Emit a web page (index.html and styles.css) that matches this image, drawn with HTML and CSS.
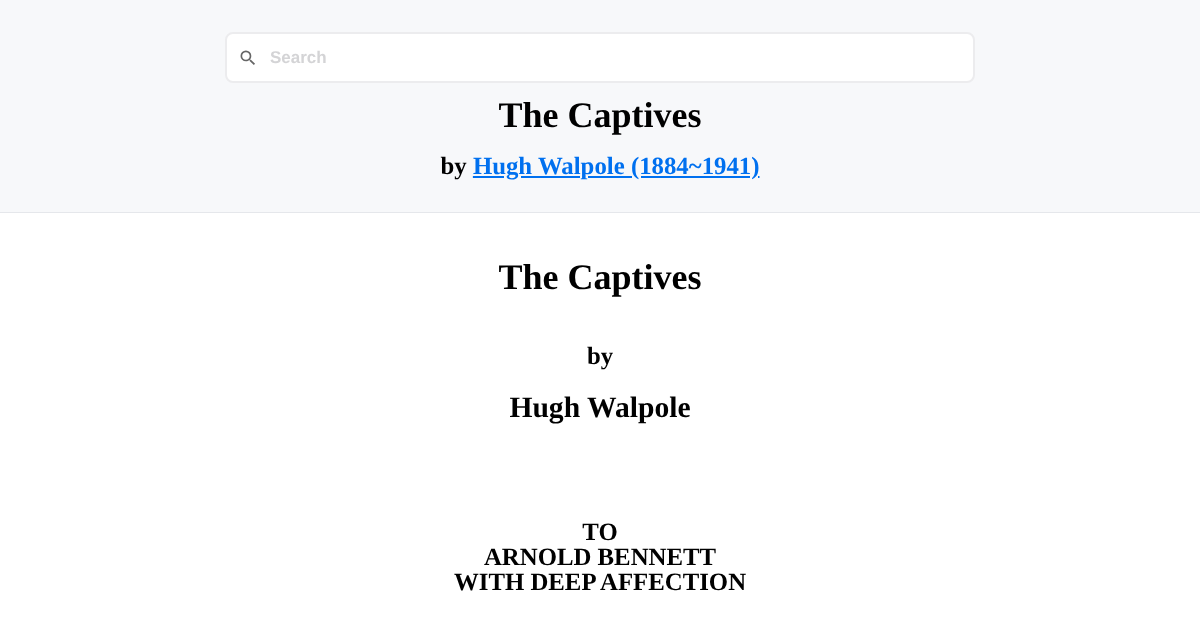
FILE: index.html
```html
<!DOCTYPE html>
<html lang="en">
<head>
<meta charset="utf-8">
<title>The Captives</title>
<link rel="stylesheet" href="styles.css">
</head>
<body>
<header class="top">
  <div class="search">
    <svg class="search-icon" viewBox="0 0 24 24" width="20" height="20"><path fill="#666" d="M15.5 14h-.79l-.28-.27A6.47 6.47 0 0 0 16 9.5 6.5 6.5 0 1 0 9.5 16c1.61 0 3.09-.59 4.23-1.57l.27.28v.79l5 4.99L20.49 19l-4.99-5zm-6 0C7.01 14 5 11.99 5 9.5S7.01 5 9.5 5 14 7.01 14 9.5 11.99 14 9.5 14z"/></svg>
    <span class="placeholder">Search</span>
  </div>
  <h1 class="title top-title">The Captives</h1>
  <h2 class="byline">by <a href="#">Hugh Walpole (1884~1941)</a></h2>
</header>
<main class="book">
  <h1 class="title book-title">The Captives</h1>
  <h3 class="by">by</h3>
  <h2 class="author">Hugh Walpole</h2>
  <h3 class="dedication">TO<br>ARNOLD BENNETT<br>WITH DEEP AFFECTION</h3>
</main>
</body>
</html>
```
FILE: styles.css
```css
* { box-sizing: border-box; }
html, body { margin: 0; padding: 0; }
body {
  background: #fff;
  color: #000;
  font-family: "Liberation Serif", "Times New Roman", serif;
  text-rendering: geometricPrecision;
  overflow: hidden;
  height: 628px;
}
.top {
  height: 213px;
  background: #f7f8fa;
  border-bottom: 1px solid #e5e7eb;
  padding-top: 32px;
  display: flex;
  flex-direction: column;
  align-items: center;
  will-change: transform;
}
.search {
  width: 750px;
  height: 51px;
  background: #fff;
  border: 2px solid #ececee;
  border-radius: 8px;
  display: flex;
  align-items: center;
  padding-left: 11px;
  flex: none;
}
.search-icon { flex: none; }
.placeholder {
  margin-left: 12px;
  font: bold 17px "Liberation Sans", Arial, sans-serif;
  color: #d4d4d6;
}
.title {
  margin: 0;
  font-size: 36px;
  font-weight: bold;
  line-height: 42px;
  text-align: center;
}
.top-title { margin-top: 11px; }
.byline {
  margin: 16px 0 0;
  font-size: 24.8px;
  line-height: 30px;
  text-align: center;
}
.byline a { color: #0070ef; text-decoration: underline; }
.book { text-align: center; padding-top: 43px; will-change: transform; }
.by { margin: 44px 0 0; font-size: 24.8px; line-height: 30px; }
.author { margin: 19px 0 0; font-size: 29.6px; line-height: 34px; }
.dedication { margin: 95px 0 0; font-size: 24.8px; line-height: 25px; }
```
